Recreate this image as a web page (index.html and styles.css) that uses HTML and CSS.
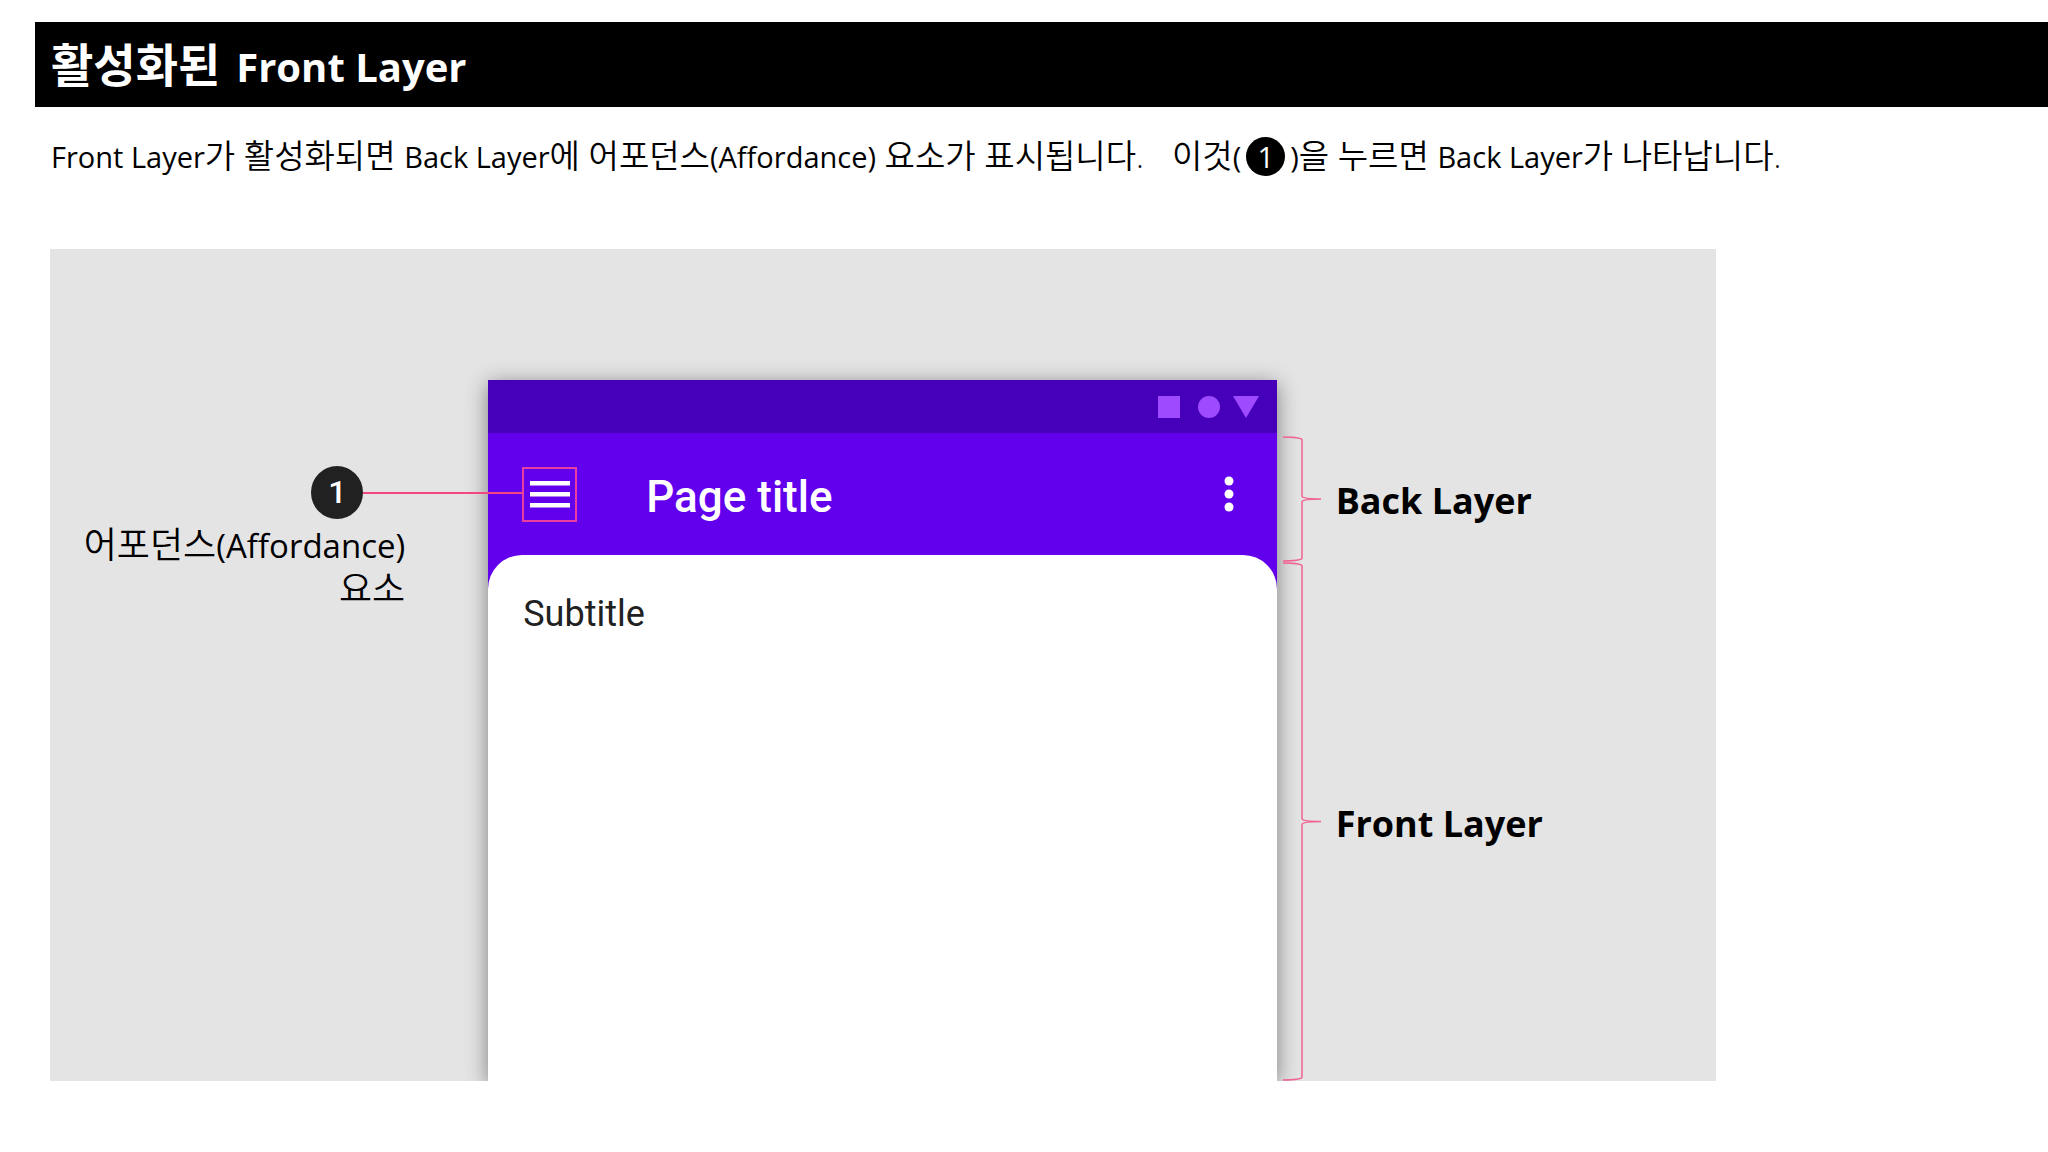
FILE: index.html
```html
<!DOCTYPE html>
<html lang="ko">

<head>
    <meta charset="UTF-8">
    <meta name="viewport" content="width=device-width, initial-scale=1.0">
    <title>활성화된 Front Layer</title>
    <link rel="stylesheet" href="styles.css">
</head>

<body>
    <h1 class="page-heading">활성화된 <span class="latin">Front Layer</span></h1>

    <p class="intro">
        <span><span class="latin">Front Layer</span>가 활성화되면 <span class="latin">Back Layer</span>에 어포던스<span class="latin">(Affordance)</span> 요소가 표시됩니다.</span>
        <span>이것<span class="latin">(</span><b class="num">1</b><span class="latin">)</span>을 누르면 <span class="latin">Back Layer</span>가 나타납니다.</span>
    </p>

    <main class="figure">
        <!-- 왼쪽 설명 -->
        <div class="callout">
            <div class="callout-row">
                <span class="callout-num">1</span>
                <span class="callout-line"></span>
            </div>
            <p class="callout-text">어포던스<span class="latin">(Affordance)</span><br>요소</p>
        </div>

        <!-- 휴대폰 화면 -->
        <div class="phone">
            <div class="status-bar">
                <svg width="102" height="22" viewBox="0 0 102 22" fill="#9e4bff">
                    <rect x="0" y="0" width="22" height="22" />
                    <circle cx="51" cy="11" r="11" />
                    <path d="M75 0h26L88 22z" />
                </svg>
            </div>
            <div class="app-bar">
                <button class="menu-button" type="button" aria-label="메뉴">
                    <svg width="40" height="27" viewBox="0 0 40 27" fill="#fff">
                        <path d="M0 0h40v4.5H0zM0 11h40v4.5H0zM0 22h40v4.5H0z" />
                    </svg>
                </button>
                <h2 class="app-title">Page title</h2>
                <button class="more-button" type="button" aria-label="더보기">
                    <svg width="10" height="36" viewBox="0 0 10 36" fill="#fff">
                        <circle cx="5" cy="5" r="4.5" />
                        <circle cx="5" cy="18" r="4.5" />
                        <circle cx="5" cy="31" r="4.5" />
                    </svg>
                </button>
            </div>
            <div class="front-layer">
                <h3 class="subtitle">Subtitle</h3>
            </div>
        </div>

        <!-- 오른쪽 레이어 표시 -->
        <div class="notes">
            <div class="note note-back">
                <svg class="brace" viewBox="0 0 38 126" preserveAspectRatio="none">
                    <path d="M0 1C10 1 19 2 19 4V60C19 62 27 63 38 63C27 63 19 64 19 66V122C19 124 10 125 0 125" />
                </svg>
                <span class="note-name">Back Layer</span>
            </div>
            <div class="note note-front">
                <svg class="brace" viewBox="0 0 38 518" preserveAspectRatio="none">
                    <path d="M0 1C10 1 19 2 19 4V256C19 258 27 259 38 259C27 259 19 260 19 262V514C19 516 10 517 0 517" />
                </svg>
                <span class="note-name">Front Layer</span>
            </div>
        </div>
    </main>
</body>

</html>
```

FILE: styles.css
```css
* {
    box-sizing: border-box;
}

body {
    margin: 0;
    padding: 22px 0 0 35px;
    background-color: #fff;
    color: #000;
    font-family: "Open Sans", "Noto Sans CJK KR", sans-serif;
}

h1,
h2,
h3,
p {
    margin: 0;
}

/* 제목 */
.page-heading {
    height: 85px;
    padding: 12px 16px;
    background-color: #000;
    color: #fff;
    font-size: 46px;
    line-height: 60px;
    font-weight: 700;
}

.page-heading .latin {
    margin-left: 4px;
    font-size: 40px;
}

.intro {
    display: flex;
    flex-wrap: wrap;
    column-gap: 28px;
    padding: 27px 16px 0;
    font-size: 33px;
    line-height: 44px;
    font-weight: 350;
}

/* 영문은 한글보다 조금 작게 */
.intro .latin {
    font-size: 29px;
    font-weight: 400;
}

.num {
    display: inline-block;
    width: 39px;
    height: 39px;
    margin: 0 5px;
    border-radius: 50%;
    background-color: #000;
    color: #fff;
    font-size: 29px;
    font-weight: 400;
    line-height: 39px;
    text-align: center;
}

/* 그림 영역 */
.figure {
    display: grid;
    grid-template-columns: 438fr 788fr 439fr;
    margin: 70px 16.5% 0 15px;
    padding-top: 131px;
    background-color: #e5e4e5;
    overflow: hidden;
}

.callout {
    position: relative;
    z-index: 1;
    padding-top: 86px;
}

.callout-row {
    display: flex;
    align-items: center;
    width: 211px;
    margin-left: auto;
    margin-right: -34px;
}

.callout-num {
    width: 52px;
    height: 53px;
    border-radius: 50%;
    background-color: #212121;
    color: #fff;
    font-family: Roboto, sans-serif;
    font-size: 32px;
    font-weight: 500;
    line-height: 53px;
    text-align: center;
}

.callout-line {
    flex: 1;
    height: 2px;
    background-color: #f4467f;
}

.callout-text {
    padding: 4px 83px 0 0;
    font-size: 36px;
    line-height: 43px;
    font-weight: 350;
    text-align: right;
}

.callout-text .latin {
    font-size: 33px;
    font-weight: 400;
}

/* 휴대폰 */
.phone {
    display: flex;
    flex-direction: column;
    background-color: #6200ee;
    box-shadow: 0 4px 20px rgba(0, 0, 0, 0.45);
    font-family: Roboto, sans-serif;
}

.status-bar {
    display: flex;
    align-items: center;
    justify-content: flex-end;
    height: 53px;
    padding-right: 17px;
    background-color: #4700ba;
}

.app-bar {
    display: flex;
    align-items: center;
    height: 122px;
    padding: 0 43px 0 34px;
}

.menu-button,
.more-button {
    display: flex;
    align-items: center;
    justify-content: center;
    padding: 0;
    border: none;
    background: none;
    cursor: pointer;
}

.menu-button {
    width: 55px;
    height: 55px;
    border: 2px solid #e83ea0;
}

.app-title {
    flex: 1;
    margin-left: 69px;
    padding-top: 5px;
    color: #fff;
    font-size: 44px;
    font-weight: 500;
}

.front-layer {
    flex: 1;
    min-height: 526px;
    padding: 37px 35px;
    border-radius: 34px 34px 0 0;
    background-color: #fff;
}

.subtitle {
    color: #212121;
    font-size: 36px;
    line-height: 44px;
    font-weight: 400;
}

/* 레이어 이름 */
.notes {
    display: flex;
    flex-direction: column;
    padding: 56px 0 0 6px;
}

.note {
    display: flex;
    align-items: center;
    gap: 15px;
    font-size: 36px;
    font-weight: 700;
}

.note-name {
    padding-top: 3px;
}

.note-back {
    height: 126px;
}

.note-front {
    flex: 1;
}

.brace {
    width: 38px;
    height: 100%;
    fill: none;
    stroke: #f06292;
    stroke-width: 1.5;
}
```
